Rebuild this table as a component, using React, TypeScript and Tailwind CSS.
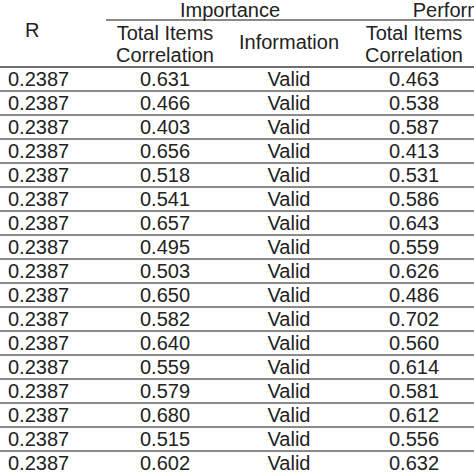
const rows: [string, string, string, string][] = [
  ["0.2387", "0.631", "Valid", "0.463"],
  ["0.2387", "0.466", "Valid", "0.538"],
  ["0.2387", "0.403", "Valid", "0.587"],
  ["0.2387", "0.656", "Valid", "0.413"],
  ["0.2387", "0.518", "Valid", "0.531"],
  ["0.2387", "0.541", "Valid", "0.586"],
  ["0.2387", "0.657", "Valid", "0.643"],
  ["0.2387", "0.495", "Valid", "0.559"],
  ["0.2387", "0.503", "Valid", "0.626"],
  ["0.2387", "0.650", "Valid", "0.486"],
  ["0.2387", "0.582", "Valid", "0.702"],
  ["0.2387", "0.640", "Valid", "0.560"],
  ["0.2387", "0.559", "Valid", "0.614"],
  ["0.2387", "0.579", "Valid", "0.581"],
  ["0.2387", "0.680", "Valid", "0.612"],
  ["0.2387", "0.515", "Valid", "0.556"],
  ["0.2387", "0.602", "Valid", "0.632"],
];

export default function App() {
  return (
    <div className="w-[474px] h-[474px] overflow-hidden bg-white text-[#222] font-['Liberation_Sans',Arial,sans-serif] text-[20px] leading-[21px]">
      <table className="w-[586px] border-collapse table-fixed">
        <colgroup>
          <col className="w-[106px]" />
          <col className="w-[118px]" />
          <col className="w-[130px]" />
          <col className="w-[120px]" />
          <col className="w-[112px]" />
        </colgroup>
        <thead>
          <tr className="h-[20px]">
            <th rowSpan={2} className="font-normal text-left align-middle pl-[25px] pb-[6px] border-b-2 border-[#6f6f6f]">
              R
            </th>
            <th colSpan={2} className="font-normal text-center align-top leading-[18px] pt-[1px] border-b-2 border-[#8a8a8a]">
              Importance
            </th>
            <th colSpan={2} className="font-normal text-center align-top leading-[18px] pt-[1px] border-b-2 border-[#8a8a8a]">
              Performance
            </th>
          </tr>
          <tr className="h-[47px]">
            <th className="font-normal text-center align-middle leading-[22px] border-b-2 border-[#6f6f6f]">
              Total Items
              <br />
              Correlation
            </th>
            <th className="font-normal text-center align-middle pb-[2px] border-b-2 border-[#6f6f6f]">
              Information
            </th>
            <th className="font-normal text-center align-middle leading-[22px] border-b-2 border-[#6f6f6f]">
              Total Items
              <br />
              Correlation
            </th>
            <th className="font-normal text-center align-middle pb-[2px] border-b-2 border-[#6f6f6f]">
              Information
            </th>
          </tr>
        </thead>
        <tbody>
          {rows.map((r, i) => (
            <tr key={i} className="h-[24px] border-b-2 border-[#8a8a8a]">
              <td className="text-left pl-[8px] align-middle">{r[0]}</td>
              <td className="text-center align-middle">{r[1]}</td>
              <td className="text-center align-middle">{r[2]}</td>
              <td className="text-center align-middle">{r[3]}</td>
              <td className="text-center align-middle">Valid</td>
            </tr>
          ))}
        </tbody>
      </table>
    </div>
  );
}
